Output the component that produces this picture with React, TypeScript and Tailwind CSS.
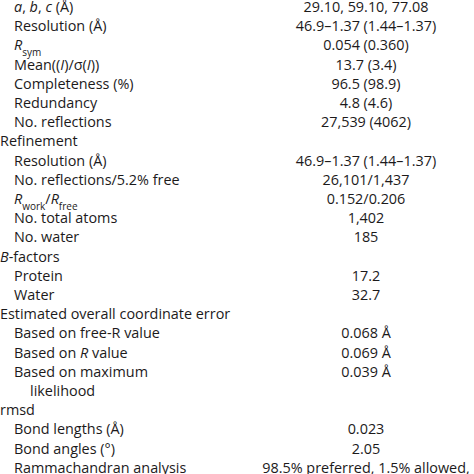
import React from "react";

type Row = {
  label: React.ReactNode;
  value?: React.ReactNode;
  header?: boolean;
};

const A = "Å";

const Sub = ({ children }: { children: React.ReactNode }) => (
  <sub className="text-[10px] leading-none align-[-3px]">{children}</sub>
);

const rows: Row[] = [
  { label: <><i>a</i>, <i>b</i>, <i>c</i> ({A})</>, value: "29.10, 59.10, 77.08" },
  { label: <>Resolution ({A})</>, value: "46.9–1.37 (1.44–1.37)" },
  { label: <><i>R</i><Sub>sym</Sub></>, value: "0.054 (0.360)" },
  { label: <>Mean((<i>I</i>)/σ(<i>I</i>))</>, value: "13.7 (3.4)" },
  { label: "Completeness (%)", value: "96.5 (98.9)" },
  { label: "Redundancy", value: "4.8 (4.6)" },
  { label: "No. reflections", value: "27,539 (4062)" },
  { label: "Refinement", header: true },
  { label: <>Resolution ({A})</>, value: "46.9–1.37 (1.44–1.37)" },
  { label: "No. reflections/5.2% free", value: "26,101/1,437" },
  {
    label: (
      <>
        <i>R</i><Sub>work</Sub>/<i>R</i><Sub>free</Sub>
      </>
    ),
    value: "0.152/0.206",
  },
  { label: "No. total atoms", value: "1,402" },
  { label: "No. water", value: "185" },
  { label: <><i>B</i>-factors</>, header: true },
  { label: "Protein", value: "17.2" },
  { label: "Water", value: "32.7" },
  { label: "Estimated overall coordinate error", header: true },
  { label: "Based on free-R value", value: `0.068 ${A}` },
  { label: <>Based on <i>R</i> value</>, value: `0.069 ${A}` },
  {
    label: (
      <>
        Based on maximum
        <br />
        <span className="pl-4">likelihood</span>
      </>
    ),
    value: `0.039 ${A}`,
  },
  { label: "rmsd", header: true },
  { label: <>Bond lengths ({A})</>, value: "0.023" },
  { label: "Bond angles (°)", value: "2.05" },
  { label: "Rammachandran analysis", value: "98.5% preferred, 1.5% allowed," },
];

export default function App() {
  return (
    <div className="w-[474px] h-[474px] overflow-hidden bg-white text-[#1c1a1b]">
      <div className="-mt-[3px] grid grid-cols-[258px_216px] font-['Open_Sans','Noto_Sans',sans-serif] text-[14.4px] leading-[19.2px]">
        {rows.map((r, i) => (
          <React.Fragment key={i}>
            <div className={r.header ? "whitespace-nowrap" : "pl-[14px] whitespace-nowrap"}>
              {r.label}
            </div>
            <div className="flex justify-center whitespace-nowrap">
              {r.value ?? ""}
            </div>
          </React.Fragment>
        ))}
      </div>
    </div>
  );
}
